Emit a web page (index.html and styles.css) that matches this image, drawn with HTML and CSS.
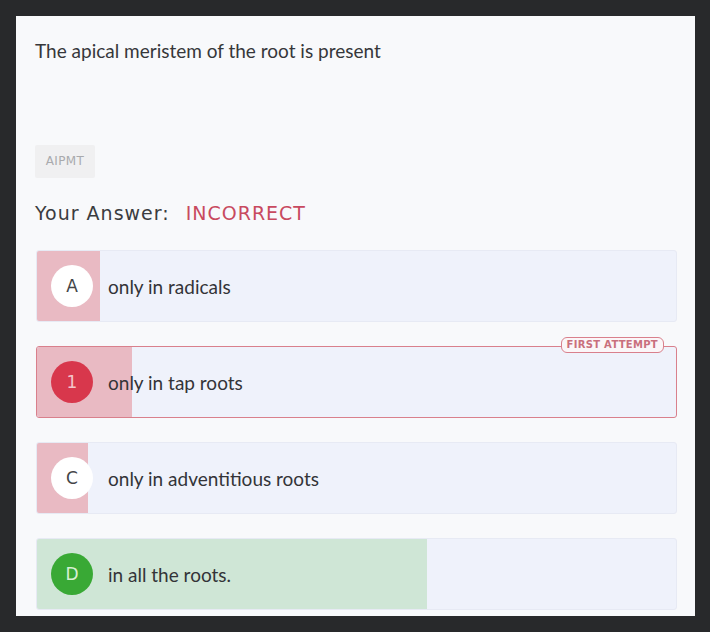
FILE: index.html
```html
<!DOCTYPE html>
<html>
<head>
<meta charset="utf-8">
<link rel="stylesheet" href="styles.css">
</head>
<body>
<div class="card">
  <p class="question">The apical meristem of the root is present</p>
  <span class="tag">AIPMT</span>
  <div class="answer-line"><span class="answer-label">Your Answer:</span><span class="answer-status">INCORRECT</span></div>
  <div class="options">
    <div class="option">
      <div class="fill fill-wrong" style="width:63px"></div>
      <span class="circle">A</span>
      <span class="option-text">only in radicals</span>
    </div>
    <div class="option option-chosen">
      <div class="fill fill-wrong" style="width:95px"></div>
      <span class="circle circle-wrong">1</span>
      <span class="option-text">only in tap roots</span>
      <span class="badge">FIRST ATTEMPT</span>
    </div>
    <div class="option">
      <div class="fill fill-wrong" style="width:51px"></div>
      <span class="circle">C</span>
      <span class="option-text">only in adventitious roots</span>
    </div>
    <div class="option">
      <div class="fill fill-right" style="width:390px"></div>
      <span class="circle circle-right">D</span>
      <span class="option-text">in all the roots.</span>
    </div>
  </div>
</div>
</body>
</html>
```

FILE: styles.css
```css
html, body {
  margin: 0;
  padding: 0;
  background: #28292b;
}
body {
  padding: 16px 15px 0 16px;
  height: 632px;
  box-sizing: border-box;
  overflow: hidden;
}
.card {
  background: #f8f9fb;
  height: 600px;
  padding: 23px 18px 0 19px;
  box-sizing: border-box;
}
.question {
  margin: 0;
  font-family: "Lato", "Noto Sans", sans-serif;
  font-size: 19px;
  line-height: 24px;
  color: #36373a;
}
.tag {
  display: inline-block;
  margin-top: 82px;
  width: 60px;
  height: 33px;
  line-height: 33px;
  text-align: center;
  background: #f0f0f1;
  color: #a9aaad;
  font-family: "DejaVu Sans", sans-serif;
  font-size: 12px;
  letter-spacing: 0.4px;
  border-radius: 2px;
}
.answer-line {
  margin-top: 23px;
  font-family: "DejaVu Sans", sans-serif;
  font-size: 19px;
  letter-spacing: 1px;
  line-height: 24px;
  display: flex;
  gap: 16px;
}
.answer-label { color: #3b3c3f; }
.answer-status { color: #c84a5f; }
.options {
  margin-top: 25px;
  margin-left: 1px;
  display: flex;
  flex-direction: column;
  gap: 24px;
}
.option {
  position: relative;
  height: 72px;
  background: #eff2fb;
  border: 1px solid #e7eaf4;
  border-radius: 3px;
  display: flex;
  align-items: center;
  box-sizing: border-box;
}
.option-chosen {
  border: 1.5px solid #d9808c;
}
.fill {
  position: absolute;
  left: 0;
  top: 0;
  bottom: 0;
  border-radius: 2px 0 0 2px;
}
.fill-wrong { background: #e9bac3; }
.fill-right { background: #cfe6d6; }
.circle {
  position: relative;
  margin-left: 14px;
  width: 42px;
  height: 42px;
  border-radius: 50%;
  background: #ffffff;
  color: #444548;
  display: flex;
  align-items: center;
  justify-content: center;
  font-family: "DejaVu Sans", sans-serif;
  font-size: 17px;
}
.circle-wrong { background: #d8374c; color: #f4c4cb; }
.circle-right { background: #39a935; color: #d6f0d4; }
.option-text {
  position: relative;
  margin-left: 15px;
  font-family: "Lato", "Noto Sans", sans-serif;
  font-size: 19px;
  color: #333438;
}
.badge {
  position: absolute;
  top: -10px;
  right: 12px;
  height: 14px;
  padding: 0 5px;
  line-height: 14px;
  background: #fbf6f8;
  border: 1.5px solid #d9808c;
  border-radius: 6px;
  color: #c96f7d;
  font-family: "DejaVu Sans", sans-serif;
  font-size: 10px;
  font-weight: 600;
  letter-spacing: 0.3px;
}
```
